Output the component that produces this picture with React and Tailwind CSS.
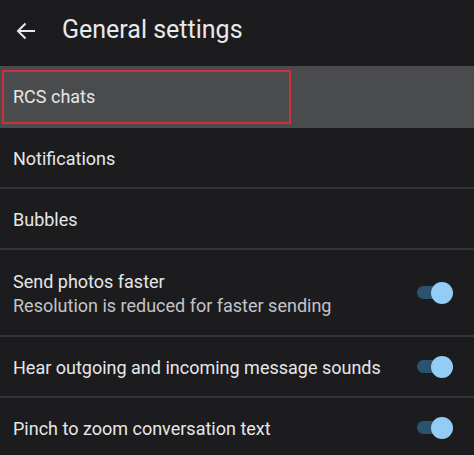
import React, { useState } from 'react';

const Toggle = ({ on, onClick }) => (
  <button onClick={onClick} className="relative w-[38px] h-[24px] flex items-center shrink-0">
    <span className={`absolute left-[1px] w-[34px] h-[13px] rounded-full ${on ? 'bg-[#29536f]' : 'bg-[#5a5c5f]'}`} />
    <span
      className={`absolute top-[1px] w-[22px] h-[22px] rounded-full ${on ? 'left-[15px] bg-[#93cdf6]' : 'left-0 bg-[#b8babd]'}`}
    />
  </button>
);

const Row = ({ title, subtitle, toggle, on, onToggle, highlight, tall }) => (
  <div
    className={`flex items-center justify-between pl-[13px] pr-[20px] ${
      tall ? 'h-[87px]' : highlight ? 'h-[62px]' : 'h-[61px]'
    } ${highlight ? 'bg-[#4a4b4d] relative' : 'border-b-2 border-[#333436]'}`}
  >
    {highlight && (
      <div className="absolute left-[2px] top-[4px] w-[289px] h-[54px] border-2 border-[#cf2f3d]" />
    )}
    <div className={`flex flex-col ${highlight ? 'pt-0' : 'pt-[2px]'}`}>
      <span className="text-[18px] leading-[24px] text-[#e6e7e9]">{title}</span>
      {subtitle && <span className="text-[18px] leading-[24px] text-[#c2c4c7]">{subtitle}</span>}
    </div>
    {toggle && <Toggle on={on} onClick={onToggle} />}
  </div>
);

export default function App() {
  const [toggles, setToggles] = useState({ photos: true, sounds: true, pinch: true });
  const flip = (k) => setToggles((p) => ({ ...p, [k]: !p[k] }));

  return (
    <div className="w-[474px] h-[455px] overflow-hidden bg-[#1c1c1e]" style={{ fontFamily: 'Roboto, "Noto Sans", sans-serif' }}>
      <div className="h-[66px] flex items-center">
        <svg width="20" height="18" viewBox="0 0 20 18" className="ml-[16px] mt-[-4px]" fill="none" stroke="#e8e9eb" strokeWidth="2">
          <path d="M19 9H2.5" />
          <path d="M9.5 1.5L2 9l7.5 7.5" />
        </svg>
        <span className="ml-[26px] mt-[-6px] text-[25px] text-[#e8e9eb]">General settings</span>
      </div>
      <Row title="RCS chats" highlight />
      <Row title="Notifications" />
      <Row title="Bubbles" />
      <Row
        title="Send photos faster"
        subtitle="Resolution is reduced for faster sending"
        toggle
        tall
        on={toggles.photos}
        onToggle={() => flip('photos')}
      />
      <Row title="Hear outgoing and incoming message sounds" toggle on={toggles.sounds} onToggle={() => flip('sounds')} />
      <Row title="Pinch to zoom conversation text" toggle on={toggles.pinch} onToggle={() => flip('pinch')} />
    </div>
  );
}
